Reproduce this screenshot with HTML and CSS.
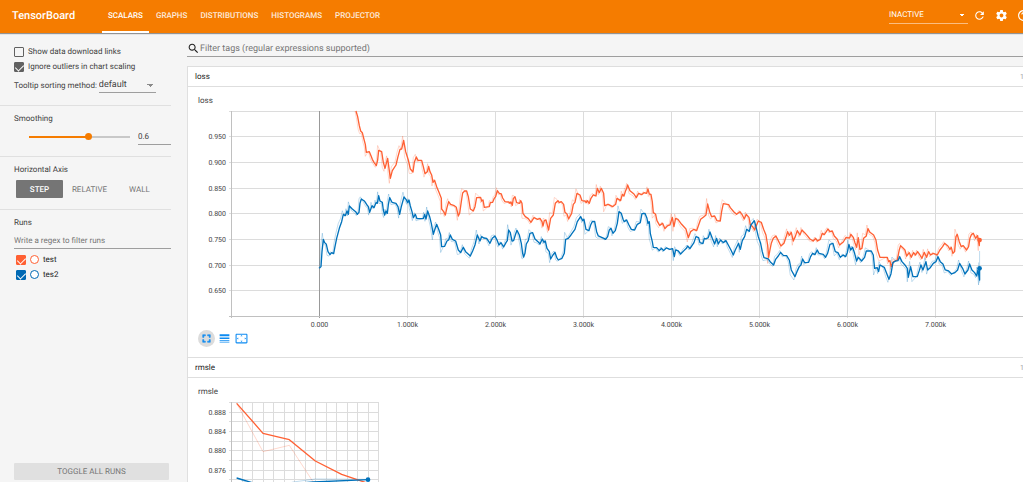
FILE: index.html
```
<!DOCTYPE html>
<html lang="en">
<head>
  <meta charset="UTF-8">
  <meta name="viewport" content="width=device-width, initial-scale=1.0">
  <title>TensorBoard</title>
  <link rel="stylesheet" href="styles.css">
</head>
<body>
  <div class="app">

    <header class="toolbar">
      <h1>TensorBoard</h1>
      <nav class="tabs">
        <a href="#scalars" class="active">SCALARS</a>
        <a href="#graphs">GRAPHS</a>
        <a href="#distributions">DISTRIBUTIONS</a>
        <a href="#histograms">HISTOGRAMS</a>
        <a href="#projector">PROJECTOR</a>
      </nav>
      <div class="toolbar-right">
        <select class="inactive-select" aria-label="Inactive dashboards">
          <option>INACTIVE</option>
        </select>
        <button class="icon-button" aria-label="Reload">
          <svg viewBox="0 0 24 24"><path d="M17.65 6.35C16.2 4.9 14.21 4 12 4c-4.42 0-7.99 3.58-7.99 8s3.57 8 7.99 8c3.73 0 6.84-2.55 7.73-6h-2.08c-.82 2.33-3.04 4-5.65 4-3.31 0-6-2.69-6-6s2.69-6 6-6c1.66 0 3.14.69 4.22 1.78L13 11h7V4l-2.35 2.35z"/></svg>
        </button>
        <button class="icon-button" aria-label="Settings">
          <svg viewBox="0 0 24 24"><path d="M19.43 12.98c.04-.32.07-.64.07-.98s-.03-.66-.07-.98l2.11-1.65c.19-.15.24-.42.12-.64l-2-3.46c-.12-.22-.39-.3-.61-.22l-2.49 1c-.52-.4-1.08-.73-1.69-.98l-.38-2.65C14.46 2.18 14.25 2 14 2h-4c-.25 0-.46.18-.49.42l-.38 2.65c-.61.25-1.17.59-1.69.98l-2.49-1c-.23-.09-.49 0-.61.22l-2 3.46c-.13.22-.07.49.12.64l2.11 1.65c-.04.32-.07.65-.07.98s.03.66.07.98l-2.11 1.65c-.19.15-.24.42-.12.64l2 3.46c.12.22.39.3.61.22l2.49-1c.52.4 1.08.73 1.69.98l.38 2.65c.03.24.24.42.49.42h4c.25 0 .46-.18.49-.42l.38-2.65c.61-.25 1.17-.59 1.69-.98l2.49 1c.23.09.49 0 .61-.22l2-3.46c.12-.22.07-.49-.12-.64l-2.11-1.65zM12 15.5c-1.93 0-3.5-1.57-3.5-3.5s1.57-3.5 3.5-3.5 3.5 1.57 3.5 3.5-1.57 3.5-3.5 3.5z"/></svg>
        </button>
        <button class="icon-button" aria-label="Help">
          <svg viewBox="0 0 24 24"><path d="M11 18h2v-2h-2v2zm1-16C6.48 2 2 6.48 2 12s4.48 10 10 10 10-4.48 10-10S17.52 2 12 2zm0 18c-4.41 0-8-3.59-8-8s3.59-8 8-8 8 3.59 8 8-3.59 8-8 8zm0-14c-2.21 0-4 1.79-4 4h2c0-1.1.9-2 2-2s2 .9 2 2c0 2-3 1.75-3 5h2c0-2.25 3-2.5 3-5 0-2.21-1.79-4-4-4z"/></svg>
        </button>
      </div>
    </header>

    <div class="dashboard">
      <aside class="sidebar">
        <section class="settings">
          <label class="check-row"><input type="checkbox"> Show data download links</label>
          <label class="check-row"><input type="checkbox" checked> Ignore outliers in chart scaling</label>
          <div class="sort-row">
            <label for="sorting">Tooltip sorting method:</label>
            <select id="sorting"><option>default</option></select>
          </div>
        </section>

        <section class="smoothing">
          <label for="smooth">Smoothing</label>
          <div class="slider-row">
            <input type="range" id="smooth" min="0" max="1" step="0.1" value="0.6">
            <input type="text" id="smoothValue" value="0.6" aria-label="Smoothing value">
          </div>
        </section>

        <section class="axis">
          <h2>Horizontal Axis</h2>
          <div class="axis-buttons">
            <button class="selected">STEP</button>
            <button>RELATIVE</button>
            <button>WALL</button>
          </div>
        </section>

        <section class="runs">
          <label for="runFilter">Runs</label>
          <input type="text" id="runFilter" placeholder="Write a regex to filter runs">
          <label class="run-row run-test"><input type="checkbox" checked><span class="ring"></span>test</label>
          <label class="run-row run-tes2"><input type="checkbox" checked><span class="ring"></span>tes2</label>
        </section>

        <button class="toggle-all">TOGGLE ALL RUNS</button>
      </aside>

      <main class="content">
        <div class="tag-filter">
          <svg viewBox="0 0 24 24"><path d="M15.5 14h-.79l-.28-.27C15.41 12.59 16 11.11 16 9.5 16 5.91 13.09 3 9.5 3S3 5.91 3 9.5 5.91 16 9.5 16c1.61 0 3.09-.59 4.23-1.57l.27.28v.79l5 4.99L20.49 19l-4.99-5zm-6 0C7.01 14 5 11.99 5 9.5S7.01 5 9.5 5 14 7.01 14 9.5 11.99 14 9.5 14z"/></svg>
          <input type="text" placeholder="Filter tags (regular expressions supported)" aria-label="Filter tags">
        </div>

        <section class="category">
          <button class="category-head"><span>loss</span><span class="count">1</span></button>
          <div class="category-body">
            <h3>loss</h3>
            <svg class="chart" id="lossChart"></svg>
            <div class="chart-actions">
              <button class="round" aria-label="Expand chart">
                <svg viewBox="0 0 24 24"><path d="M7 14H5v5h5v-2H7v-3zm-2-4h2V7h3V5H5v5zm12 7h-3v2h5v-5h-2v3zM14 5v2h3v3h2V5h-5z"/></svg>
              </button>
              <button aria-label="Toggle y-axis log scale">
                <svg viewBox="0 0 24 24"><path d="M3 17h18v-2H3v2zm0 3h18v-1H3v1zm0-7h18v-3H3v3zm0-9v4h18V4H3z"/></svg>
              </button>
              <button aria-label="Fit domain to data">
                <svg viewBox="0 0 24 24"><path d="M12 5.5 10 8h4l-2-2.500zM18 10v4l2.500-1.990L18 10zM6 10l-2.500 2.010L6 14v-4zm8 6h-4l2 2.500 2-2.500zm7-13H3c-1.100 0-2 .9-2 2v14c0 1.100.9 2 2 2h18c1.100 0 2-.9 2-2V5c0-1.100-.9-2-2-2zm0 16H3V5h18v14z"/></svg>
              </button>
            </div>
          </div>
        </section>

        <section class="category">
          <button class="category-head"><span>rmsle</span><span class="count">1</span></button>
          <div class="category-body">
            <h3>rmsle</h3>
            <svg class="chart" id="rmsleChart"></svg>
          </div>
        </section>
      </main>
    </div>
  </div>

  <script src="charts.js"></script>
</body>
</html>
```
FILE: styles.css
```
* {
  box-sizing: border-box;
}
body {
  font-family: Roboto, "Liberation Sans", sans-serif;
  font-size: 8px;
  text-rendering: geometricPrecision;
  color: #424242;
  margin: 0;
  overflow: hidden;
}
h1, h2, h3 {
  margin: 0;
  font-weight: 400;
}
button, input, select {
  font-family: inherit;
  font-size: inherit;
  text-rendering: inherit;
  color: inherit;
  border: none;
  background: none;
  padding: 0;
  margin: 0;
  outline: none;
}
.app {
  display: flex;
  flex-direction: column;
  width: calc(100% + 8px);
  height: 100vh;
}

/* Toolbar */
.toolbar {
  display: flex;
  flex: none;
  height: 33px;
  padding: 0 1px 0 12px;
  background: #f57c00;
  color: #fff;
  box-shadow: 0 1px 1px rgba(0, 0, 0, 0.4);
  z-index: 1;
}
.toolbar h1 {
  width: 90px;
  font-size: 11px;
  font-weight: 500;
  line-height: 31px;
}
.tabs {
  display: flex;
  gap: 1px;
}
.tabs a {
  padding: 0 6px;
  color: #fff;
  font-weight: 500;
  line-height: 31px;
  text-decoration: none;
  opacity: 0.85;
}
.tabs a.active {
  border-bottom: 2px solid #fff;
  opacity: 1;
}
.toolbar-right {
  display: flex;
  align-items: center;
  gap: 9px;
  margin-left: auto;
  height: 31px;
}
select {
  appearance: none;
}
.inactive-select {
  width: 79px;
  height: 16px;
  margin-right: -4px;
  padding-bottom: 2px;
  border-bottom: 1px solid #fbbd80;
  background: conic-gradient(from -45deg at 50% 100%, #fff 90deg, transparent 0) no-repeat 70px 6px / 6px 3px;
}
.icon-button {
  width: 13px;
  height: 13px;
}
.icon-button svg {
  display: block;
  width: 13px;
  height: 13px;
  fill: #fff;
}

/* Sidebar */
.dashboard {
  display: flex;
  flex: 1;
  min-height: 0;
}
.sidebar {
  display: flex;
  flex-direction: column;
  flex: none;
  width: 187px;
  padding: 11px 16px 2px 0;
  background: #f5f5f5;
}
.sidebar section {
  padding: 0 0 0 14px;
  border-bottom: 1px solid #e0e0e0;
}
.sidebar .settings {
  height: 62px;
}
.sidebar h2, .smoothing > label, .runs > label:first-child {
  display: block;
  font-size: 8px;
  line-height: 10px;
}
input[type="checkbox"] {
  appearance: none;
  flex: none;
  width: 10px;
  height: 10px;
  border: 1px solid #616161;
  border-radius: 1px;
}
input[type="checkbox"]:checked {
  display: grid;
  place-items: center;
  background: #616161;
}
input[type="checkbox"]:checked::after {
  content: "";
  width: 4px;
  height: 7px;
  margin-bottom: 2px;
  border: solid #fff;
  border-width: 0 1px 1px 0;
  transform: rotate(45deg);
}
.check-row {
  display: flex;
  align-items: center;
  gap: 4px;
  height: 15px;
}
.sort-row {
  display: flex;
  align-items: center;
  gap: 2px;
  margin-top: 4px;
}
.sort-row select {
  width: 57px;
  height: 15px;
  font-size: 9px;
  border-bottom: 1px solid #9e9e9e;
  background: conic-gradient(from -45deg at 50% 100%, #8a8a8a 90deg, transparent 0) no-repeat 48px 6px / 6px 3px;
}
.sidebar .smoothing {
  height: 51px;
  padding-top: 8px;
}
.slider-row {
  display: flex;
  align-items: center;
  margin-top: 5px;
  padding-left: 13px;
}
.slider-row input[type="range"] {
  appearance: none;
  width: 105px;
  height: 12px;
  margin-right: 6px;
}
.slider-row input[type="range"]::-webkit-slider-runnable-track {
  height: 2px;
  margin: 0 2px;
  background: linear-gradient(to right, #f57c00 60%, #c8c8c8 60%);
}
.slider-row input[type="range"]::-webkit-slider-thumb {
  appearance: none;
  width: 7px;
  height: 7px;
  margin-top: -3px;
  border-radius: 50%;
  background: #f57c00;
}
.slider-row input[type="text"] {
  width: 33px;
  height: 16px;
  border-bottom: 1px solid #9e9e9e;
}
.sidebar .axis {
  height: 53px;
  padding-top: 8px;
}
.axis-buttons {
  display: flex;
  gap: 3px;
  margin: 5px 0 0 2px;
}
.axis-buttons button {
  width: 47px;
  height: 18px;
  border-radius: 1px;
  color: #757575;
}
.axis-buttons button.selected {
  background: #757575;
  color: #fff;
  font-weight: 500;
}
.sidebar .runs {
  padding-top: 8px;
  border: none;
}
#runFilter {
  display: block;
  width: 100%;
  height: 16px;
  margin: 5px 0 3px;
  border-bottom: 1px solid #9e9e9e;
}
#runFilter::placeholder {
  color: #757575;
}
.run-row {
  display: flex;
  align-items: center;
  height: 15px;
  padding-left: 2px;
  color: #212121;
}
.ring {
  width: 9px;
  height: 9px;
  margin: 0 4px;
  border: 1px solid currentColor;
  border-radius: 50%;
  background: #fff;
}
.run-test .ring, .run-test input { border-color: #ff6033; }
.run-tes2 .ring, .run-tes2 input { border-color: #0069b4; }
.run-test input:checked { background: #ff6033; }
.run-tes2 input:checked { background: #0069b4; }
.toggle-all {
  height: 17px;
  margin: auto 2px 0 14px;
  border-radius: 1px;
  background: #e0e0e0;
  color: #757575;
}

/* Content */
.content {
  flex: 1;
  min-width: 0;
  overflow: hidden;
  padding-top: 7px;
  background: #f5f5f5;
}
.tag-filter {
  display: flex;
  align-items: center;
  height: 17px;
  margin-bottom: 9px;
  border-bottom: 1px solid #9e9e9e;
}
.tag-filter svg {
  width: 13px;
  height: 13px;
  fill: #212121;
}
.tag-filter input {
  flex: 1;
  padding-top: 2px;
  font-size: 9px;
}
.tag-filter input::placeholder {
  color: #757575;
}
.category-head {
  display: flex;
  justify-content: space-between;
  align-items: center;
  width: 100%;
  height: 21px;
  padding: 0 6px 0 7px;
  border: 1px solid #dedede;
  background: #fff;
  color: #212121;
}
.category-head .count {
  color: #9e9e9e;
  font-size: 7px;
}
.category-body {
  padding: 8px 0 10px 10px;
  border-left: 1px solid #e0e0e0;
  background: #fff;
}
.category-body h3 {
  font-size: 8px;
  line-height: 12px;
}
.chart {
  display: block;
  width: 100%;
  height: 223px;
}
.chart text {
  font-size: 7px;
  fill: #424242;
}
.grid { stroke: #dcdcdc; }
.axis-line { stroke: #c0c0c0; }
.zero { stroke: #999; }
.run-line { fill: none; stroke-width: 4; stroke-linejoin: round; }
.raw { stroke-width: 3; opacity: 0.25; }
.chart-actions {
  display: flex;
  align-items: center;
  height: 17px;
}
.chart-actions button {
  width: 17px;
  height: 17px;
  display: grid;
  place-items: center;
}
.chart-actions svg {
  width: 13px;
  height: 13px;
  fill: #0d8bf2;
}
.chart-actions .round {
  margin-right: 1px;
  border-radius: 50%;
  background: #dcdcdc;
}
.chart-actions .round path {
  stroke: #0d8bf2;
}
```
FILE: charts.js
```
const NS = "http://www.w3.org/2000/svg";
const ORANGE = "#ff6033";
const BLUE = "#0072bb";

// smoothed series, in thirds of a pixel from the top left of the plot
const lossTest = [375,0,380,17,385,44,389,60,394,65,399,85,403,100,406,124,415,122,420,134,424,145,429,154,436,164,440,147,443,118,452,122,457,154,462,172,466,157,470,142,474,172,478,202,484,179,495,162,501,137,507,115,512,114,518,88,524,122,532,147,538,174,546,183,550,154,556,138,561,148,572,148,577,167,582,188,589,182,593,166,597,182,602,192,606,214,611,208,617,227,624,244,631,262,632,294,638,302,643,312,648,290,653,272,659,280,670,284,676,289,682,315,686,307,691,272,695,246,701,240,707,240,712,257,718,294,727,300,732,287,737,260,749,259,752,270,756,267,760,289,775,287,778,275,785,274,790,262,794,257,799,239,805,247,811,249,815,261,822,272,833,273,837,277,840,273,844,283,847,263,852,257,857,275,866,277,869,269,873,277,876,307,883,317,892,323,900,334,909,320,920,325,927,322,933,332,936,345,940,329,945,327,949,342,953,357,959,322,967,312,973,277,981,269,985,275,991,272,998,280,1002,304,1008,309,1013,324,1022,307,1027,280,1032,274,1038,247,1047,252,1053,269,1062,270,1066,275,1069,269,1075,277,1080,262,1087,252,1095,255,1099,232,1105,245,1111,232,1118,247,1121,284,1132,280,1145,287,1154,280,1158,262,1169,269,1174,250,1179,255,1184,239,1187,232,1190,222,1197,239,1209,249,1216,260,1223,247,1232,251,1239,245,1247,247,1251,234,1255,249,1260,250,1264,272,1267,305,1274,310,1278,329,1286,343,1295,337,1302,353,1309,345,1317,342,1324,319,1329,347,1334,322,1341,325,1352,340,1365,354,1372,380,1379,362,1389,355,1397,359,1403,342,1409,325,1419,317,1425,312,1430,279,1436,302,1442,317,1451,315,1458,329,1468,330,1472,302,1477,278,1493,281,1498,290,1509,303,1517,310,1527,302,1534,312,1540,324,1546,310,1554,319,1558,340,1565,347,1571,357,1577,342,1582,330,1591,334,1598,355,1605,372,1610,402,1613,439,1617,417,1621,397,1627,382,1635,375,1642,389,1650,405,1659,397,1665,379,1670,362,1675,373,1681,364,1687,390,1693,377,1699,359,1707,372,1713,357,1721,365,1729,374,1737,384,1747,390,1754,382,1760,390,1768,385,1774,367,1780,371,1786,362,1791,354,1797,362,1804,360,1810,375,1819,385,1826,402,1837,393,1845,380,1856,381,1860,370,1867,379,1872,395,1877,409,1882,380,1887,415,1893,412,1898,382,1906,375,1911,353,1917,364,1928,372,1935,387,1940,417,1947,439,1969,439,1973,452,1977,449,1981,467,1988,452,1999,447,2005,417,2009,404,2017,412,2022,417,2027,435,2035,425,2041,439,2048,425,2054,432,2060,422,2067,432,2073,442,2080,424,2087,439,2093,422,2099,432,2107,427,2119,432,2127,417,2135,407,2141,397,2151,405,2157,415,2161,409,2166,427,2171,422,2175,377,2179,370,2185,392,2191,407,2197,404,2207,417,2213,407,2217,382,2222,370,2227,367,2234,382,2240,374,2245,404,2246,387];
const lossTes2 = [265,472,270,467,273,422,277,385,281,395,286,400,291,422,297,431,302,425,308,428,312,407,317,382,325,352,332,332,337,310,343,314,348,300,352,310,355,285,364,294,374,302,379,310,384,304,387,277,391,264,400,270,408,282,412,287,416,304,423,284,429,290,435,275,439,277,443,254,447,270,454,274,457,297,461,312,465,300,469,307,472,282,476,260,483,274,495,277,501,287,506,310,511,287,519,258,525,265,530,275,534,267,538,285,543,302,547,320,553,310,558,323,577,323,581,310,585,324,590,300,596,317,601,337,607,370,612,354,617,340,623,355,629,372,632,407,641,406,648,390,653,387,658,372,664,385,674,390,682,417,689,425,697,409,704,422,718,435,725,420,732,402,739,372,747,390,752,377,759,381,767,382,777,397,784,382,792,375,799,389,804,402,810,395,818,408,825,395,829,389,833,357,838,365,843,390,848,389,853,372,858,358,865,372,871,397,875,427,878,438,882,427,886,399,892,389,897,367,905,365,912,384,921,392,927,399,934,384,939,394,943,390,948,412,955,422,959,444,966,432,972,424,977,439,982,447,993,442,1000,427,1004,385,1012,382,1020,372,1032,355,1039,332,1049,317,1055,329,1059,325,1065,355,1074,359,1079,342,1084,332,1091,331,1097,362,1102,375,1112,379,1119,382,1124,385,1130,377,1135,357,1140,352,1146,367,1153,359,1159,337,1164,302,1171,307,1177,327,1180,332,1187,327,1194,342,1201,355,1211,357,1219,340,1228,335,1233,308,1242,307,1248,322,1251,337,1255,332,1258,367,1264,392,1267,409,1277,410,1285,419,1292,412,1298,419,1306,411,1317,415,1325,413,1330,437,1334,417,1342,420,1349,429,1359,419,1367,411,1370,405,1377,413,1389,395,1395,377,1403,380,1407,395,1416,398,1420,382,1425,384,1432,380,1437,363,1444,382,1451,399,1457,382,1462,399,1469,387,1477,395,1485,389,1492,402,1500,417,1507,432,1513,417,1523,397,1528,415,1534,389,1541,377,1547,355,1555,361,1560,342,1570,329,1575,347,1582,377,1589,397,1594,422,1599,440,1612,444,1619,454,1628,462,1634,445,1642,435,1649,424,1657,433,1667,434,1675,447,1681,477,1692,497,1698,482,1705,467,1710,462,1715,444,1721,455,1733,454,1739,437,1745,427,1752,431,1759,417,1764,427,1777,430,1784,439,1790,427,1797,400,1806,397,1813,422,1821,425,1828,439,1837,432,1844,437,1849,425,1854,400,1859,417,1865,409,1871,427,1877,450,1882,439,1892,450,1901,439,1906,420,1921,420,1927,432,1931,472,1939,470,1943,482,1947,462,1960,469,1967,487,1974,505,1980,489,1986,455,1994,450,2001,449,2006,437,2013,452,2022,462,2029,472,2032,499,2039,467,2046,497,2059,497,2065,479,2070,462,2076,477,2085,452,2090,477,2098,470,2107,457,2115,452,2121,437,2128,452,2136,459,2143,477,2153,480,2162,489,2172,485,2180,477,2186,457,2195,472,2202,489,2211,477,2216,459,2223,477,2231,485,2237,495,2241,477,2246,507,2246,472];

function add(parent, tag, attrs, text) {
  const el = document.createElementNS(NS, tag);
  for (const key in attrs) el.setAttribute(key, attrs[key]);
  if (text) el.textContent = text;
  parent.appendChild(el);
  return el;
}

function line(svg, x1, y1, x2, y2, cls) {
  add(svg, "line", { x1, y1, x2, y2, class: cls, "shape-rendering": "crispEdges" });
}

function series(parent, points, color, raw) {
  add(parent, "polyline", { points: points.join(" "), stroke: color, class: raw ? "run-line raw" : "run-line" });
}

// the unsmoothed run overshoots each move of the smoothed one
function unsmooth(points) {
  const out = [];
  for (let i = 0; i < points.length; i += 2) {
    const prev = i ? points[i - 1] : points[1];
    out.push(points[i] - 3, Math.max(0, points[i + 1] + 0.5 * (points[i + 1] - prev)));
  }
  return out;
}

function plotGroup(svg, left, top) {
  return add(svg, "g", { transform: `translate(${left} ${top}) scale(0.3333)` });
}

function drawLoss() {
  const svg = document.getElementById("lossChart");
  const left = 33, top = 4, bottom = 209;
  for (let i = 0; i < 8; i++) {
    const y = Math.floor(top + i * 77 / 3) + 0.5;
    line(svg, left - 2, y, "100%", y, "grid");
    if (i) add(svg, "text", { x: 28, y: y + 2, "text-anchor": "end" }, (1 - i * 0.05).toFixed(3));
  }
  for (let i = 0; i < 9; i++) {
    const x = left + i * 88 + 0.5;
    line(svg, x, top, x, bottom + 2, i === 1 ? "zero" : i ? "grid" : "axis-line");
    if (i) add(svg, "text", { x, y: 220, "text-anchor": "middle" }, (i - 1).toFixed(3) + (i > 1 ? "k" : ""));
  }
  line(svg, left - 2, bottom + 0.5, "100%", bottom + 0.5, "axis-line");

  const plot = plotGroup(svg, left, top);
  series(plot, unsmooth(lossTest), ORANGE, true);
  series(plot, unsmooth(lossTes2), BLUE, true);
  series(plot, [2246, 420, 2246, 515], BLUE, true);
  series(plot, lossTest, ORANGE);
  series(plot, lossTes2, BLUE);
  add(plot, "circle", { cx: 2246, cy: 387, r: 7, fill: ORANGE });
  add(plot, "circle", { cx: 2246, cy: 472, r: 7, fill: BLUE });
}

function drawRmsle() {
  const svg = document.getElementById("rmsleChart");
  const left = 33, top = 4;
  for (let i = 0; i < 9; i++) {
    const y = Math.round(top + i * 29 / 3) + 0.5;
    line(svg, left - 2, y, 180, y, "grid");
    if (i % 2) add(svg, "text", { x: 28, y: y + 2, "text-anchor": "end" }, (0.888 - (i - 1) * 0.002).toFixed(3));
  }
  for (let i = 0; i < 15; i++) {
    const x = Math.round(left + i * 10.5) + 0.5;
    line(svg, x, top, x, "100%", i ? "grid" : "axis-line");
  }
  const plot = plotGroup(svg, left, top);
  series(plot, [17, 4, 96, 149, 175, 130, 253, 250], ORANGE, true);
  series(plot, [17, 228, 96, 262, 187, 240, 253, 231, 411, 232], BLUE, true);
  series(plot, [17, 4, 96, 94, 175, 113, 253, 177, 332, 217, 411, 244], ORANGE);
  series(plot, [17, 228, 96, 252, 247, 240, 411, 233], BLUE);
  add(plot, "circle", { cx: 411, cy: 233, r: 7, fill: BLUE });
}

drawLoss();
drawRmsle();
```
